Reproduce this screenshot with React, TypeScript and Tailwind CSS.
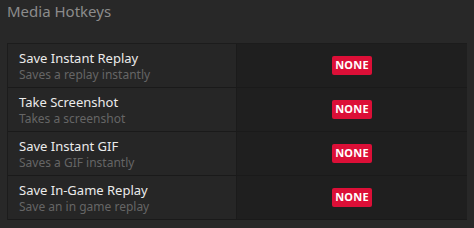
import React from "react";

const rows = [
  { title: "Save Instant Replay", sub: "Saves a replay instantly" },
  { title: "Take Screenshot", sub: "Takes a screenshot" },
  { title: "Save Instant GIF", sub: "Saves a GIF instantly" },
  { title: "Save In-Game Replay", sub: "Save an in game replay" },
];

export default function App() {
  return (
    <div
      className="w-[474px] h-[228px] bg-[#282828] overflow-hidden"
      style={{ fontFamily: '"Noto Sans", "Open Sans", sans-serif' }}
    >
      <div className="pl-[7px] pt-[1px] h-[43px] text-[15px] leading-[20px] text-[#8c8c8c]">
        Media Hotkeys
      </div>
      <div className="ml-[7px] w-[460px] flex flex-col border-t border-l border-[#1c1c1c]">
        {rows.map((r) => (
          <div key={r.title} className="flex h-[44px] border-b border-[#1a1a1a]">
            <div className="w-[229px] bg-[#262626] border-r border-[#1b1b1b] flex flex-col justify-center pl-[11px] pt-[1px]">
              <div className="text-[13px] leading-[18px] text-[#ebebeb]">{r.title}</div>
              <div className="text-[12px] leading-[16px] text-[#656565]">{r.sub}</div>
            </div>
            <div className="flex-1 bg-[#1f1f1f] flex items-center justify-center pb-[1px]">
              <div className="w-[40px] h-[19px] bg-[#dc0f37] rounded-[2px] flex items-center justify-center text-[11px] font-bold text-white tracking-[0.2px]">
                NONE
              </div>
            </div>
          </div>
        ))}
      </div>
    </div>
  );
}
